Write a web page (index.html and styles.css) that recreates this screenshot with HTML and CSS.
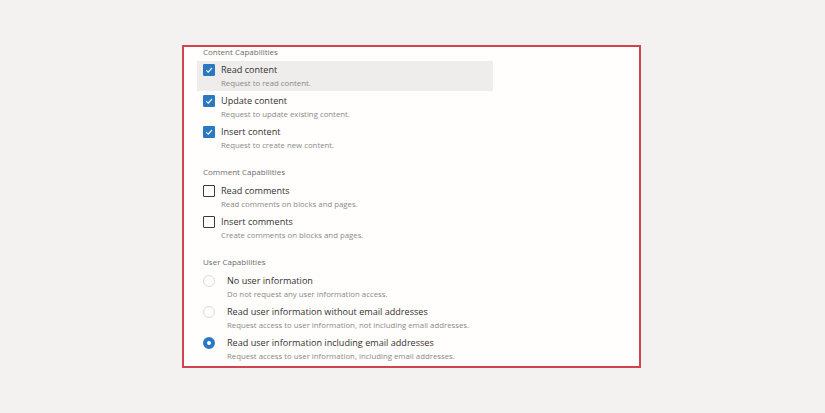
FILE: index.html
```html
<!DOCTYPE html>
<html>
<head>
<meta charset="utf-8">
<link rel="stylesheet" href="styles.css">
</head>
<body>
<div class="frame">
  <section class="group">
    <div class="group-title">Content Capabilities</div>
    <div class="row hover">
      <span class="check on"><svg viewBox="0 0 12 12"><path d="M2.6 6.2 L5 8.5 L9.6 3.6" fill="none" stroke="#fff" stroke-width="1.4"/></svg></span>
      <div class="text"><div class="label">Read content</div><div class="desc">Request to read content.</div></div>
    </div>
    <div class="row">
      <span class="check on"><svg viewBox="0 0 12 12"><path d="M2.6 6.2 L5 8.5 L9.6 3.6" fill="none" stroke="#fff" stroke-width="1.4"/></svg></span>
      <div class="text"><div class="label">Update content</div><div class="desc">Request to update existing content.</div></div>
    </div>
    <div class="row">
      <span class="check on"><svg viewBox="0 0 12 12"><path d="M2.6 6.2 L5 8.5 L9.6 3.6" fill="none" stroke="#fff" stroke-width="1.4"/></svg></span>
      <div class="text"><div class="label">Insert content</div><div class="desc">Request to create new content.</div></div>
    </div>
  </section>
  <section class="group">
    <div class="group-title">Comment Capabilities</div>
    <div class="row">
      <span class="check"></span>
      <div class="text"><div class="label">Read comments</div><div class="desc">Read comments on blocks and pages.</div></div>
    </div>
    <div class="row">
      <span class="check"></span>
      <div class="text"><div class="label">Insert comments</div><div class="desc">Create comments on blocks and pages.</div></div>
    </div>
  </section>
  <section class="group">
    <div class="group-title">User Capabilities</div>
    <div class="row radio-row">
      <span class="radio"></span>
      <div class="text"><div class="label">No user information</div><div class="desc">Do not request any user information access.</div></div>
    </div>
    <div class="row radio-row">
      <span class="radio"></span>
      <div class="text"><div class="label">Read user information without email addresses</div><div class="desc">Request access to user information, not including email addresses.</div></div>
    </div>
    <div class="row radio-row">
      <span class="radio on"></span>
      <div class="text"><div class="label">Read user information including email addresses</div><div class="desc">Request access to user information, including email addresses.</div></div>
    </div>
  </section>
</div>
</body>
</html>
```
FILE: styles.css
```css
html, body {
  margin: 0;
  padding: 0;
}
body {
  background: #f3f2f1;
  font-family: "Open Sans", "Noto Sans", sans-serif;
  width: 825px;
  height: 413px;
  overflow: hidden;
}
.frame {
  box-sizing: border-box;
  margin: 45px 0 0 182px;
  width: 459px;
  height: 323px;
  background: #fffefd;
  border: 2px solid #d0434f;
  padding: 0 0 0 13px;
}
.group {
  margin-top: 14px;
}
.group:first-child {
  margin-top: 0;
}
.group-title {
  font-size: 8px;
  line-height: 10px;
  color: #6e6c6a;
  padding-left: 6px;
  margin-bottom: 5px;
}
.group:first-child .group-title {
  margin-bottom: 4px;
}
.row {
  display: flex;
  align-items: flex-start;
  width: 296px;
  box-sizing: border-box;
  padding: 3px 6px 0 6px;
  height: 30px;
  margin-bottom: 1px;
}
.row.hover {
  background: #eeedeb;
}
.check {
  flex: none;
  box-sizing: border-box;
  width: 12px;
  height: 12px;
  margin-right: 6px;
  border: 1px solid #3b3a39;
  border-radius: 1px;
}
.check.on {
  background: #2a78c4;
  border-color: #2a78c4;
}
.check svg {
  display: block;
  width: 10px;
  height: 10px;
}
.radio {
  flex: none;
  box-sizing: border-box;
  width: 12px;
  height: 12px;
  margin-right: 12px;
  border: 1px solid #dcdad8;
  border-radius: 50%;
}
.radio.on {
  border: 4px solid #2a78c4;
  background: #fff;
}
.label {
  font-size: 9.1px;
  line-height: 12px;
  color: #323130;
}
.desc {
  font-size: 7.8px;
  line-height: 14px;
  color: #8a8886;
}
```
